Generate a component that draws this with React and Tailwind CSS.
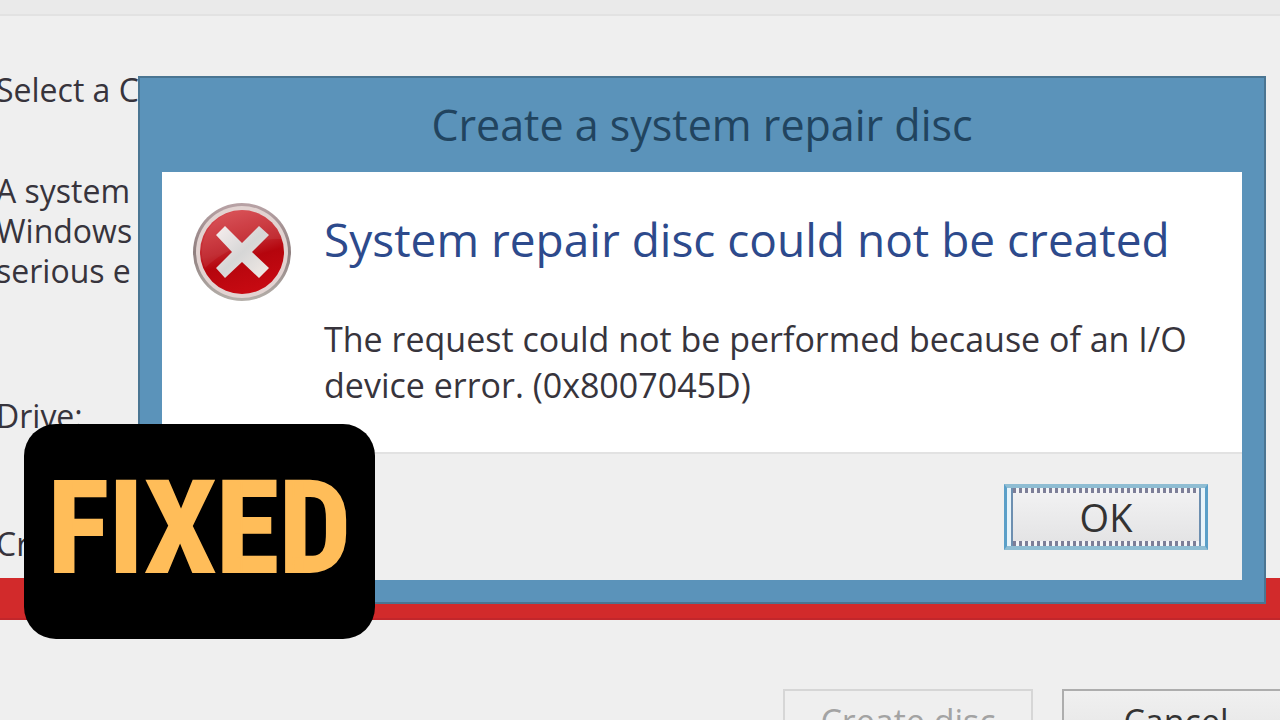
// ─── Icons ────────────────────────────────────────────────────────────────────

function ErrorIcon() {
  return (
    <svg viewBox="0 0 100 100" className="w-[100px] h-[100px] shrink-0" aria-hidden="true">
      <defs>
        <linearGradient id="rim" x1="0" y1="0" x2="0" y2="1">
          <stop offset="0" stopColor="#b9a3a6" />
          <stop offset="0.5" stopColor="#8f7f7f" />
          <stop offset="1" stopColor="#b5b0aa" />
        </linearGradient>
        <linearGradient id="ball" x1="0.3" y1="0" x2="0.6" y2="1">
          <stop offset="0" stopColor="#d8494f" />
          <stop offset="0.45" stopColor="#bf2229" />
          <stop offset="0.6" stopColor="#b5050d" />
          <stop offset="1" stopColor="#c80a12" />
        </linearGradient>
        <linearGradient id="cross" x1="0" y1="0" x2="1" y2="1">
          <stop offset="0" stopColor="#f7eeee" />
          <stop offset="0.5" stopColor="#d6d6d6" />
          <stop offset="1" stopColor="#f3ebe6" />
        </linearGradient>
      </defs>
      <circle cx="50" cy="50" r="49" fill="url(#rim)" />
      <circle cx="50" cy="50" r="46" fill="#e2d3d1" />
      <circle cx="50" cy="50" r="42" fill="url(#ball)" />
      <path d="M13 66A42 42 0 0 1 50 8a42 42 0 0 1 40 29C62 36 34 46 13 66z" fill="#fff" opacity="0.06" />
      <path
        d="M33 24L50 41L67 24L77 33L60 50L77 66L67 76L50 60L33 76L24 66L40 50L24 33z"
        fill="url(#cross)"
      />
    </svg>
  )
}

// ─── Window behind the dialog ─────────────────────────────────────────────────

function RepairDiscWindow() {
  return (
    <div className="h-full flex flex-col">
      <div className="h-4 shrink-0 bg-[#eaeaea] border-b-2 border-[#e2e2e2]" />
      <div className="h-[562px] shrink-0 pt-[54px] -ml-1 text-[32px] leading-10 text-[#37343c] whitespace-nowrap">
        <p>Select a C</p>
        <p className="mt-[61px]">
          A system
          <br />
          Windows
          <br />
          serious e
        </p>
        <p className="mt-[105px]">Drive:</p>
        <p className="mt-[88px]">Cr</p>
      </div>
      <div className="h-[42px] shrink-0 bg-[#d22a2b] border-b-2 border-[#c2262b]" />
      <div className="pt-[69px] flex justify-end gap-[29px] text-[34px] leading-10">
        <button
          type="button"
          disabled
          className="w-[250px] h-[64px] shrink-0 border-2 border-[#d6d6d6] bg-[#efefef] text-[#a3a3a3]"
        >
          Create disc
        </button>
        <button
          type="button"
          className="w-[228px] h-[64px] shrink-0 -mr-2.5 border-2 border-[#adadad] bg-linear-to-b from-[#f0f0f0] to-[#e4e4e4] text-[#333]"
        >
          Cancel
        </button>
      </div>
    </div>
  )
}

// ─── Error dialog ─────────────────────────────────────────────────────────────

function FocusDots() {
  return (
    <span className="block h-[5px] bg-[repeating-linear-gradient(to_right,#7d7f98_0px,#7d7f98_3px,#f4f4f6_3px,#f4f4f6_6px)]" />
  )
}

function ErrorDialog() {
  return (
    <div
      role="dialog"
      aria-labelledby="dialog-title"
      className="absolute top-[76px] left-[138px] right-[14px] px-[22px] pb-[22px] bg-[#5b93ba] border-2 border-[#4a7592]"
    >
      <h1 id="dialog-title" className="h-[94px] text-center text-[43px] leading-[94px] text-[#21445f]">
        Create a system repair disc
      </h1>
      <div className="bg-white h-[282px] pl-[30px] pr-5 pt-[30px] flex gap-8 border-b-2 border-[#e2e2e2]">
        <ErrorIcon />
        <div className="flex-1 whitespace-nowrap">
          <h2 className="text-[46px] leading-[74px] text-[#2d4a8c]">System repair disc could not be created</h2>
          <p className="mt-10 text-[34px] leading-[46px] text-[#37343c]">
            The request could not be performed because of an I/O
            <br />
            device error. (0x8007045D)
          </p>
        </div>
      </div>
      <div className="h-[126px] pt-[30px] pr-[34px] bg-[#efefef] flex justify-end">
        <button
          type="button"
          className="w-[204px] h-[66px] px-1 border-x-3 border-y-4 border-x-[#5a9fc8] border-y-[#8fbdd3] bg-[#e8f4fa]"
        >
          <span className="flex flex-col h-full border-x-2 border-[#6d8fb0]">
            <FocusDots />
            <span className="flex-1 flex items-center justify-center bg-linear-to-b from-[#f1f1f2] to-[#e4e4e5] text-[38px] leading-none text-[#333]">
              OK
            </span>
            <FocusDots />
          </span>
        </button>
      </div>
    </div>
  )
}

// ─── Badge ────────────────────────────────────────────────────────────────────

function FixedBadge() {
  return (
    <div className="absolute left-6 top-[424px] w-[351px] h-[215px] pb-2 rounded-[32px] bg-black flex items-center justify-center">
      <span className="font-['Liberation_Sans_Narrow','Roboto_Condensed',Roboto,sans-serif] font-bold text-[128px] leading-none text-[#ffbd59] [-webkit-text-stroke:2px_#ffbd59]">
        FIXED
      </span>
    </div>
  )
}

// ─── Page ─────────────────────────────────────────────────────────────────────

export default function App() {
  return (
    <div className="relative h-screen overflow-hidden bg-[#efefef] font-['Open_Sans','Noto_Sans',sans-serif]">
      <RepairDiscWindow />
      <ErrorDialog />
      <FixedBadge />
    </div>
  )
}
